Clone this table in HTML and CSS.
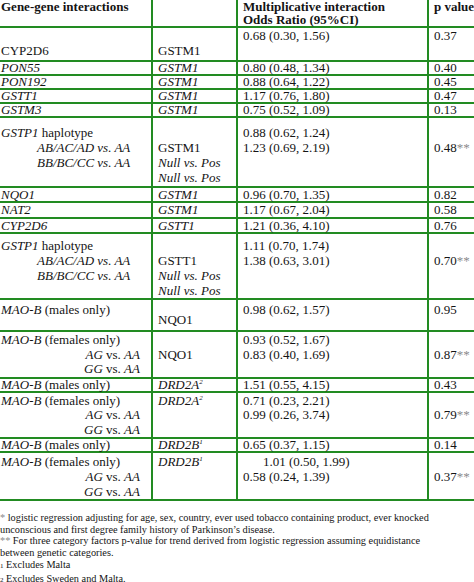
FILE: index.html
```html
<!DOCTYPE html>
<html>
<head>
<meta charset="utf-8">
<link rel="stylesheet" href="styles.css">
</head>
<body>
<div class="page">
<table class="gx">
<colgroup><col class="c1"><col class="c2"><col class="c3"><col class="c4"></colgroup>
<thead>
<tr class="hd"><th>Gene-gene interactions</th><th></th><th>Multiplicative interaction<br>Odds Ratio (95%CI)</th><th>p value</th></tr>
</thead>
<tbody>
<tr class="r-two"><td><br>CYP2D6</td><td><br>GSTM1</td><td>0.68 (0.30, 1.56)</td><td>0.37</td></tr>
<tr class="r-one"><td><i>PON55</i></td><td><i>GSTM1</i></td><td>0.80 (0.48, 1.34)</td><td>0.40</td></tr>
<tr class="r-one"><td><i>PON192</i></td><td><i>GSTM1</i></td><td>0.88 (0.64, 1.22)</td><td>0.45</td></tr>
<tr class="r-one"><td><i>GSTT1</i></td><td><i>GSTM1</i></td><td>1.17 (0.76, 1.80)</td><td>0.47</td></tr>
<tr class="r-one"><td><i>GSTM3</i></td><td><i>GSTM1</i></td><td>0.75 (0.52, 1.09)</td><td>0.13</td></tr>
<tr class="r-hap"><td><i>GSTP1</i> haplotype<div class="ind"><i>AB/AC/AD vs. AA</i></div><div class="ind"><i>BB/BC/CC vs. AA</i></div></td><td><br>GSTM1<br><i>Null vs. Pos</i><br><i>Null vs. Pos</i></td><td>0.88 (0.62, 1.24)<br>1.23 (0.69, 2.19)</td><td><br>0.48<span class="st">**</span></td></tr>
<tr class="r-mid"><td><i>NQO1</i></td><td><i>GSTM1</i></td><td>0.96 (0.70, 1.35)</td><td>0.82</td></tr>
<tr class="r-mid r-tall"><td><i>NAT2</i></td><td><i>GSTM1</i></td><td>1.17 (0.67, 2.04)</td><td>0.58</td></tr>
<tr class="r-mid"><td><i>CYP2D6</i></td><td><i>GSTT1</i></td><td>1.21 (0.36, 4.10)</td><td>0.76</td></tr>
<tr class="r-hap2"><td><i>GSTP1</i> haplotype<div class="ind"><i>AB/AC/AD vs. AA</i></div><div class="ind"><i>BB/BC/CC vs. AA</i></div></td><td><br>GSTT1<br><i>Null vs. Pos</i><br><i>Null vs. Pos</i></td><td>1.11 (0.70, 1.74)<br>1.38 (0.63, 3.01)</td><td><br>0.70<span class="st">**</span></td></tr>
<tr class="r-m1"><td><i>MAO-B</i> (males only)</td><td class="low">NQO1</td><td>0.98 (0.62, 1.57)</td><td>0.95</td></tr>
<tr class="r-f1"><td><i>MAO-B</i> (females only)<div class="rt"><i>AG</i> vs. <i>AA</i></div><div class="rt"><i>GG</i> vs. <i>AA</i></div></td><td class="mid">NQO1</td><td>0.93 (0.52, 1.67)<br>0.83 (0.40, 1.69)</td><td><br>0.87<span class="st">**</span></td></tr>
<tr class="r-one"><td><i>MAO-B</i> (males only)</td><td><i>DRD2A<sup class="sp">2</sup></i></td><td>1.51 (0.55, 4.15)</td><td>0.43</td></tr>
<tr class="r-f2"><td><i>MAO-B</i> (females only)<div class="rt"><i>AG</i> vs. <i>AA</i></div><div class="rt"><i>GG</i> vs. <i>AA</i></div></td><td><i>DRD2A<sup class="sp">2</sup></i></td><td>0.71 (0.23, 2.21)<br>0.99 (0.26, 3.74)</td><td><br>0.79<span class="st">**</span></td></tr>
<tr class="r-one"><td><i>MAO-B</i> (males only)</td><td><i>DRD2B<sup class="sp">1</sup></i></td><td>0.65 (0.37, 1.15)</td><td>0.14</td></tr>
<tr class="r-f3"><td><i>MAO-B</i> (females only)<div class="rt"><i>AG</i> vs. <i>AA</i></div><div class="rt"><i>GG</i> vs. <i>AA</i></div></td><td><i>DRD2B<sup class="sp">1</sup></i></td><td><div class="ind2">1.01 (0.50, 1.99)</div>0.58 (0.24, 1.39)</td><td><br>0.37<span class="st">**</span></td></tr>
</tbody>
</table>
<div class="notes">
<p><span class="st">*</span> logistic regression adjusting for age, sex, country, ever used tobacco containing product, ever knocked unconscious and first degree family history of Parkinson’s disease.</p>
<p><span class="st">**</span> For three category factors p-value for trend derived from logistic regression assuming equidistance between genetic categories.</p>
<p><span class="fn">1</span> Excludes Malta</p>
<p><span class="fn">2</span> Excludes Sweden and Malta.</p>
</div>
</div>
</body>
</html>
```

FILE: styles.css
```css
html, body {
  margin: 0;
  padding: 0;
  background: #ffffff;
}

.page {
  width: 474px;
  height: 582px;
  overflow: hidden;
  font-family: "Liberation Serif", "Times New Roman", serif;
  color: #141414;
}

.gx {
  border-collapse: collapse;
  table-layout: fixed;
  width: 490px;
  font-size: 13px;
}

.c1 { width: 152px; }
.c2 { width: 85px; }
.c3 { width: 191px; }
.c4 { width: 62px; }

.gx th,
.gx td {
  border: 2px solid #228b22;
  padding: 0 5px;
  vertical-align: top;
  text-align: left;
  line-height: 15px;
  white-space: nowrap;
  overflow: visible;
}

.gx th {
  border-top: none;
  font-weight: bold;
  line-height: 13px;
  height: 26px;
  box-sizing: border-box;
}

.gx tr > :first-child {
  border-left: none;
  padding-left: 1px;
}

.gx tr > :last-child {
  border-right: none;
}

.r-two td { padding-bottom: 2px; }

.r-one td { line-height: 12px; }

.r-mid td { line-height: 13px; padding-top: 0; }
.r-tall td { line-height: 14px; }

.r-hap td { padding-top: 7px; padding-bottom: 1px; }
.r-hap2 td { padding-top: 4px; }

.r-m1 td { padding-top: 2px; }
.r-m1 td.low { padding-top: 12px; padding-bottom: 3px; }

.r-f1 td,
.r-f2 td { line-height: 14.5px; padding-top: 1px; }

.r-f3 td { padding-top: 1px; padding-bottom: 0; }

.gx td.mid { vertical-align: middle; }

.ind { padding-left: 36px; }
.ind2 { padding-left: 20px; }
.rt { text-align: right; padding-right: 6px; }

.st { color: #8a8a8a; }

.sp {
  font-size: 7px;
  line-height: 0;
  vertical-align: 5px;
}

.notes {
  width: 440px;
  margin-top: 11px;
  font-size: 10.3px;
  line-height: 11.7px;
}

.notes p {
  margin: 0;
}

.fn {
  font-size: 7px;
}
```
